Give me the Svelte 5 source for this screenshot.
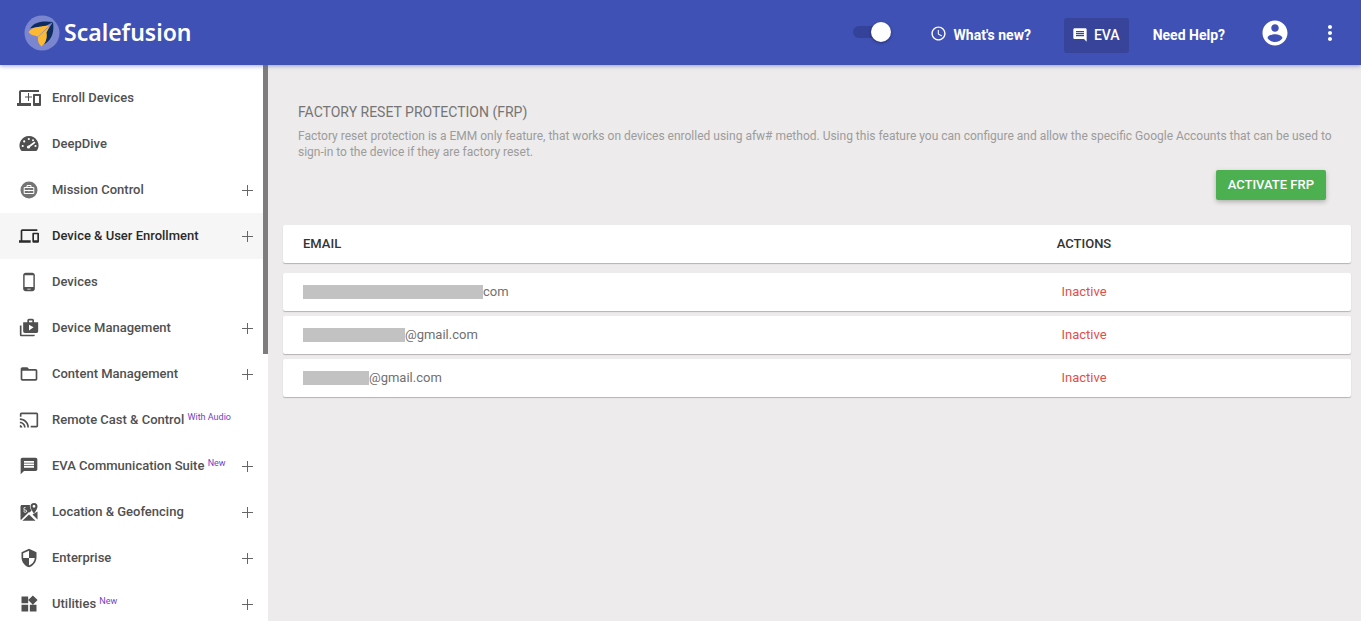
<script lang="ts">
	type Item = {
		label: string;
		icon: string;
		badge?: string;
		expandable?: boolean;
		active?: boolean;
	};

	const items: Item[] = [
		{ label: 'Enroll Devices', icon: 'enroll' },
		{ label: 'DeepDive', icon: 'gauge' },
		{ label: 'Mission Control', icon: 'mission', expandable: true },
		{
			label: 'Device & User Enrollment',
			icon: 'devices',
			expandable: true,
			active: true,
		},
		{ label: 'Devices', icon: 'phone' },
		{ label: 'Device Management', icon: 'shop', expandable: true },
		{ label: 'Content Management', icon: 'folder', expandable: true },
		{ label: 'Remote Cast & Control', icon: 'cast', badge: 'With Audio' },
		{
			label: 'EVA Communication Suite',
			icon: 'message',
			badge: 'New',
			expandable: true,
		},
		{ label: 'Location & Geofencing', icon: 'map', expandable: true },
		{ label: 'Enterprise', icon: 'shield', expandable: true },
		{ label: 'Utilities', icon: 'widgets', badge: 'New', expandable: true },
	];

	const paths: Record<string, string> = {
		devices:
			'M4 6h18V4H4c-1.1 0-2 .9-2 2v11H0v3h14v-3H4V6zm19 2h-6c-.55 0-1 .45-1 1v10c0 .55.45 1 1 1h6c.55 0 1-.45 1-1V9c0-.55-.45-1-1-1zm-1 9h-4v-7h4v7z',
		phone:
			'M16 1H8C6.34 1 5 2.34 5 4v16c0 1.66 1.34 3 3 3h8c1.66 0 3-1.34 3-3V4c0-1.66-1.34-3-3-3zm-2 20h-4v-1h4v1zm3.25-3H6.75V4h10.5v14z',
		shop: 'M3 9H1v11c0 1.11.89 2 2 2h14c1.11 0 2-.89 2-2H3V9zm15-4V3c0-1.11-.89-2-2-2h-4c-1.11 0-2 .89-2 2v2H5v11c0 1.11.89 2 2 2h14c1.11 0 2-.89 2-2V5h-5zm-6-2h4v2h-4V3zm0 12V8l5.5 3-5.5 4z',
		folder:
			'M20 6h-8l-2-2H4c-1.1 0-1.99.9-1.99 2L2 18c0 1.1.9 2 2 2h16c1.1 0 2-.9 2-2V8c0-1.1-.9-2-2-2zm0 12H4V8h16v10z',
		cast: 'M21 3H3c-1.1 0-2 .9-2 2v3h2V5h18v14h-7v2h7c1.1 0 2-.9 2-2V5c0-1.1-.9-2-2-2zM1 18v3h3c0-1.66-1.34-3-3-3zm0-4v2c2.76 0 5 2.24 5 5h2c0-3.87-3.13-7-7-7zm0-4v2c4.97 0 9 4.03 9 9h2c0-6.08-4.93-11-11-11z',
		message:
			'M20 2H4c-1.1 0-1.99.9-1.99 2L2 22l4-4h14c1.1 0 2-.9 2-2V4c0-1.1-.9-2-2-2zm-2 12H6v-2h12v2zm0-3H6V9h12v2zm0-3H6V6h12v2z',
		shield:
			'M12 1L3 5v6c0 5.55 3.84 10.74 9 12 5.16-1.26 9-6.45 9-12V5l-9-4zm0 10.99h7c-.53 4.12-3.28 7.79-7 8.94V12H5V6.3l7-3.11v8.8z',
		widgets:
			'M13 13v8h8v-8h-8zM3 21h8v-8H3v8zM3 3v8h8V3H3zm13.66-1.31L11 7.34 16.66 13l5.66-5.66-5.66-5.65z',
	};

	// hidden is the width of the masked part of the address
	const accounts = [
		{ hidden: 180, shown: 'com', status: 'Inactive' },
		{ hidden: 102, shown: '@gmail.com', status: 'Inactive' },
		{ hidden: 66, shown: '@gmail.com', status: 'Inactive' },
	];

	let enabled = $state(true);
</script>

<div class="page">
	<header>
		<a class="brand" href="#home">
			<svg width="36" height="36" viewBox="0 0 36 36" aria-hidden="true">
				<circle cx="18" cy="18" r="17.5" fill="#7a86cf" />
				<path
					fill="#0d2c62"
					d="M29 7C22 6 11 5.500 6 13.500c5-1.500 8.500-1 12-.5zM29 7c1 8 .5 17-9 22.500 2.500-5 2.500-8 2-12z"
				/>
				<path
					fill="#fdb933"
					d="M25.500 10.500C18 11.500 9 11 4.500 17c2.500 3.500 6 3.500 9.500 4.500zM25.500 11.500L14 22c-.5 3.500.5 7 3.500 9.500 6-5 5.500-11 5-14z"
				/>
			</svg>
			<span>Scalefusion</span>
		</a>
		<label class="switch">
			<input type="checkbox" bind:checked={enabled} aria-label="Toggle" />
			<span class="track"></span>
		</label>
		<a class="link news" href="#news">
			<svg width="17" height="17" viewBox="0 0 24 24" aria-hidden="true">
				<path
					d="M11.990 2C6.470 2 2 6.480 2 12s4.470 10 9.990 10C17.520 22 22 17.520 22 12S17.520 2 11.990 2zM12 20c-4.420 0-8-3.580-8-8s3.580-8 8-8 8 3.580 8 8-3.580 8-8 8zm.5-13H11v6l5.250 3.150.75-1.230-4.500-2.670z"
				/>
			</svg>
			What's new?
		</a>
		<button type="button" class="eva">
			<svg width="16" height="16" viewBox="0 0 24 24" aria-hidden="true">
				<path
					d="M21.990 4c0-1.100-.890-2-1.990-2H4c-1.100 0-2 .9-2 2v12c0 1.100.9 2 2 2h14l4 4-.01-18zM18 14H6v-2h12v2zm0-3H6V9h12v2zm0-3H6V6h12v2z"
				/>
			</svg>
			EVA
		</button>
		<a class="link help" href="#help">Need Help?</a>
		<button type="button" class="round account" aria-label="Account">
			<svg width="30" height="30" viewBox="0 0 24 24" aria-hidden="true">
				<path
					d="M12 2C6.480 2 2 6.480 2 12s4.480 10 10 10 10-4.480 10-10S17.520 2 12 2zm0 3c1.660 0 3 1.340 3 3s-1.340 3-3 3-3-1.340-3-3 1.340-3 3-3zm0 14.200c-2.500 0-4.710-1.280-6-3.220.03-1.990 4-3.080 6-3.080 1.990 0 5.970 1.090 6 3.080-1.290 1.940-3.500 3.220-6 3.220z"
				/>
			</svg>
		</button>
		<button type="button" class="round" aria-label="More">
			<svg width="24" height="24" viewBox="0 0 24 24" aria-hidden="true">
				<path
					d="M12 8c1.100 0 2-.9 2-2s-.9-2-2-2-2 .9-2 2 .9 2 2 2zm0 2c-1.100 0-2 .9-2 2s.9 2 2 2 2-.9 2-2-.9-2-2-2zm0 6c-1.100 0-2 .9-2 2s.9 2 2 2 2-.9 2-2-.9-2-2-2z"
				/>
			</svg>
		</button>
	</header>

	<div class="body">
		<aside>
			<nav>
				{#each items as item (item.label)}
					<a
						href="#{item.icon}"
						class="item"
						class:active={item.active}
						aria-current={item.active ? 'page' : undefined}
					>
						<span class="icon">
							{#if item.icon === 'enroll'}
								<svg width="24" height="24" viewBox="0 0 24 24">
									<path d={paths.devices} />
									<path d="M11 7h1v3.500h3v1h-3V15h-1v-3.500H8v-1h3z" />
								</svg>
							{:else if item.icon === 'gauge'}
								<svg width="20" height="20" viewBox="0 0 20 20">
									<path
										d="M10 2a9.500 9.500 0 0 0-8.200 14.300c.3.500.8.700 1.300.700h13.800c.5 0 1-.2 1.300-.7A9.500 9.500 0 0 0 10 2z"
									/>
									<g fill="#fff">
										<circle cx="3.700" cy="12" r="1.100" />
										<circle cx="5.200" cy="7.400" r="1.100" />
										<circle cx="9.800" cy="5" r="1.100" />
										<circle cx="14" cy="6.300" r="1" />
										<circle cx="16.500" cy="12" r="1.100" />
									</g>
									<path
										d="M9.500 13l6-4.500"
										stroke="#fff"
										stroke-width="1.600"
										stroke-linecap="round"
									/>
									<circle cx="9.500" cy="13" r="1.600" fill="#fff" />
								</svg>
							{:else if item.icon === 'mission'}
								<svg width="20" height="20" viewBox="0 0 20 20">
									<circle cx="10" cy="10" r="8.500" fill="#747474" />
									<path
										d="M8 7V5.500h4V7M5.200 7.500h9.600v6H5.200zM5.200 10.500h9.600M10 9.700v1.600"
										fill="none"
										stroke="#fff"
									/>
								</svg>
							{:else if item.icon === 'map'}
								<svg width="20" height="20" viewBox="0 0 20 20">
									<path
										d="M3 3h8c-.6 2 .2 3.700 1.500 5.500L3 18.500c-.8 0-1.500-.7-1.500-1.500V4.500C1.500 3.700 2.200 3 3 3z"
									/>
									<path
										d="M15 1a3.500 3.500 0 0 0-3.500 3.500c0 2.600 3.500 7 3.500 7s3.500-4.400 3.500-7A3.500 3.500 0 0 0 15 1zm0 4.700a1.400 1.400 0 1 1 0-2.800 1.400 1.400 0 0 1 0 2.800z"
									/>
									<path d="M18.500 9.500v8l-5-5z" />
									<path
										d="M1.500 19.500l8.500-8.500 8.500 8.500"
										fill="none"
										stroke="#fff"
										stroke-width="1.500"
									/>
									<path d="M10 12.500l6.500 6.300h-13z" />
									<path
										d="M6.500 5.500a1.300 1.300 0 1 0 0 2.500c1.500 0 1.500 2.300 0 2.300s-2-1-1.500-1.800"
										fill="none"
										stroke="#fff"
										stroke-width=".9"
									/>
								</svg>
							{:else}
								<svg width="20" height="20" viewBox="0 0 24 24">
									<path d={paths[item.icon]} />
								</svg>
							{/if}
						</span>
						<span class="label">
							{item.label}
							{#if item.badge}<sup>{item.badge}</sup>{/if}
						</span>
						{#if item.expandable}
							<svg class="plus" width="11" height="11" viewBox="0 0 11 11">
								<path d="M5 0h1v5h5v1H6v5H5V6H0V5h5z" />
							</svg>
						{/if}
					</a>
				{/each}
			</nav>
			<div class="thumb"></div>
		</aside>

		<main>
			<section class="intro">
				<h1>FACTORY RESET PROTECTION (FRP)</h1>
				<p>
					Factory reset protection is a EMM only feature, that works on devices
					enrolled using afw# method. Using this feature you can configure and
					allow the specific Google Accounts that can be used to sign-in to the
					device if they are factory reset.
				</p>
				<button type="button" class="activate">ACTIVATE FRP</button>
			</section>

			<table>
				<thead>
					<tr>
						<th scope="col">EMAIL</th>
						<th scope="col" class="action">ACTIONS</th>
					</tr>
				</thead>
				<tbody>
					{#each accounts as account}
						<tr>
							<td>
								<span class="mask" style="width: {account.hidden}px"></span>
								<span>{account.shown}</span>
							</td>
							<td class="action status">{account.status}</td>
						</tr>
					{/each}
				</tbody>
			</table>
		</main>
	</div>
</div>

<style>
	:global(body) {
		margin: 0;
	}

	.page {
		display: flex;
		flex-direction: column;
		height: 100vh;
		font: 13px/20px Roboto, 'Liberation Sans', sans-serif;
		background: #edebeb;
	}

	a {
		color: inherit;
		text-decoration: none;
	}

	button {
		font: inherit;
		border: 0;
		cursor: pointer;
	}

	svg {
		flex: none;
		fill: currentColor;
	}

	header {
		position: relative;
		z-index: 1;
		flex: none;
		display: flex;
		align-items: center;
		height: 65px;
		padding: 0 19px 0 24px;
		box-sizing: border-box;
		color: #fff;
		background: #3f51b5;
		box-shadow: 0 1px 4px rgba(63, 81, 181, 0.5);
	}

	.brand {
		display: flex;
		align-items: center;
		gap: 4px;
		margin-right: auto;
		font: 600 23px/32px 'Noto Sans', 'Open Sans', sans-serif;
	}

	.brand span {
		padding-bottom: 2px;
	}

	.switch {
		display: flex;
		margin-right: 39px;
		cursor: pointer;
	}

	.switch input {
		position: absolute;
		opacity: 0;
	}

	.track {
		display: flex;
		align-items: center;
		width: 38px;
		height: 12px;
		margin-bottom: 1px;
		border-radius: 6px;
		background: #34429a;
	}

	.track::before {
		content: '';
		width: 20px;
		height: 20px;
		border-radius: 50%;
		background: #fff;
		box-shadow: 0 1px 3px rgba(0, 0, 0, 0.4);
	}

	.switch input:checked + .track::before {
		margin-left: auto;
	}

	.link {
		display: flex;
		align-items: center;
		gap: 7px;
		padding-top: 4px;
		font-size: 14px;
		font-weight: 700;
	}

	.news {
		margin-right: 33px;
	}

	.news svg {
		margin-bottom: 3px;
	}

	.eva {
		display: flex;
		align-items: center;
		gap: 6px;
		height: 35px;
		margin: 5px 24px 0 0;
		padding: 0 9px 0 8px;
		font-size: 14px;
		font-weight: 500;
		color: #fff;
		background: #37449a;
		border-radius: 3px;
	}

	.help {
		margin-right: 35px;
	}

	.round {
		display: flex;
		padding: 0;
		color: #fff;
		background: none;
	}

	.account {
		margin-right: 28px;
	}

	.body {
		flex: 1;
		display: flex;
		min-height: 0;
	}

	aside {
		position: relative;
		flex: none;
		width: 268px;
		overflow: hidden;
		background: #fff;
	}

	nav {
		padding-top: 10px;
	}

	.item {
		display: flex;
		align-items: center;
		height: 46px;
		padding: 0 15px 0 16px;
		font-weight: 500;
		color: #505050;
	}

	.item.active {
		color: #2b2b2b;
		background: #f6f6f6;
	}

	.icon {
		display: flex;
		justify-content: center;
		width: 25px;
		margin-right: 11px;
	}

	.label {
		flex: 1;
		white-space: nowrap;
	}

	.plus {
		color: #666;
	}

	sup {
		font-size: 9px;
		font-weight: 400;
		line-height: 1;
		vertical-align: 4px;
		color: #6f3fc8;
	}

	.thumb {
		position: absolute;
		top: 0;
		right: 0;
		width: 5px;
		height: 52%;
		background: #7d7d7d;
	}

	main {
		flex: 1;
		min-width: 0;
		padding: 37px 10px 20px 15px;
		overflow: auto;
	}

	.intro {
		display: flex;
		flex-direction: column;
		padding: 0 15px;
	}

	h1 {
		margin: 0 0 6px;
		font-size: 14px;
		font-weight: 400;
		line-height: 20px;
		color: #757575;
	}

	p {
		margin: 0 0 10px;
		font-size: 12px;
		line-height: 16px;
		color: #9c9c9c;
	}

	.activate {
		align-self: flex-end;
		height: 30px;
		margin: 0 10px 25px;
		padding: 0 12px;
		font-weight: 500;
		color: #fff;
		background: #4caf50;
		border-radius: 2px;
		box-shadow: 0 2px 5px rgba(0, 0, 0, 0.26);
	}

	table,
	thead {
		display: block;
	}

	tbody {
		display: flex;
		flex-direction: column;
		gap: 5px;
		margin-top: 10px;
	}

	tr {
		display: grid;
		grid-template-columns: 1fr 1fr;
		align-items: center;
		height: 38px;
		background: #fff;
		border-radius: 2px;
		box-shadow: 0 1px 1px rgba(0, 0, 0, 0.24);
	}

	th {
		padding: 0 20px;
		font-weight: 500;
		text-align: left;
		color: #333;
	}

	td {
		display: flex;
		align-items: center;
		padding: 0 20px;
		color: #707070;
	}

	.mask {
		height: 14px;
		background: #c2c2c2;
	}

	.action {
		display: block;
		padding: 0;
		text-align: center;
	}

	.status {
		color: #e04f4b;
	}
</style>
